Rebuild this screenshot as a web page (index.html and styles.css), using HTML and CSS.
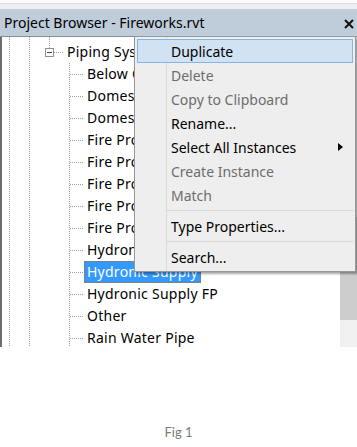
FILE: index.html
```html
<!DOCTYPE html>
<html lang="en">
<head>
    <meta charset="UTF-8">
    <meta name="viewport" content="width=device-width, initial-scale=1.0">
    <title>Project Browser - Fireworks.rvt</title>
    <link rel="stylesheet" href="styles.css">
</head>
<body>
    <div class="window">
        <div class="top-strip"></div>
        <div class="title-bar">
            <span class="title">Project Browser - Fireworks.rvt</span>
            <svg class="close" width="10" height="10" viewBox="0 0 10 10">
                <path d="M1 1L9 9M9 1L1 9" stroke="#111" stroke-width="2"/>
            </svg>
        </div>
        <div class="browser">
            <div class="tree">
                <div class="node sys">
                    <span class="toggle"></span>
                    <span class="branch"></span>
                    <span class="label">Piping Systems</span>
                </div>
                <div class="children">
                    <div class="node leaf"><span class="branch"></span><span class="label">Below Grade</span></div>
                    <div class="node leaf"><span class="branch"></span><span class="label">Domestic Cold Water</span></div>
                    <div class="node leaf"><span class="branch"></span><span class="label">Domestic Hot Water</span></div>
                    <div class="node leaf"><span class="branch"></span><span class="label">Fire Protection Dry</span></div>
                    <div class="node leaf"><span class="branch"></span><span class="label">Fire Protection Other</span></div>
                    <div class="node leaf"><span class="branch"></span><span class="label">Fire Protection Pre-Action</span></div>
                    <div class="node leaf"><span class="branch"></span><span class="label">Fire Protection Wet</span></div>
                    <div class="node leaf"><span class="branch"></span><span class="label">Fire Protection FP</span></div>
                    <div class="node leaf"><span class="branch"></span><span class="label">Hydronic Return</span></div>
                    <div class="node leaf"><span class="branch"></span><span class="label selected">Hydronic Supply</span></div>
                    <div class="node leaf"><span class="branch"></span><span class="label">Hydronic Supply FP</span></div>
                    <div class="node leaf"><span class="branch"></span><span class="label">Other</span></div>
                    <div class="node leaf"><span class="branch"></span><span class="label">Rain Water Pipe</span></div>
                    <div class="node leaf"><span class="branch"></span><span class="label">Sanitary</span></div>
                </div>
            </div>
            <div class="scrollbar"><div class="thumb"></div></div>
        </div>

        <ul class="menu">
            <li class="menu-item active">Duplicate</li>
            <li class="menu-item disabled">Delete</li>
            <li class="menu-item disabled">Copy to Clipboard</li>
            <li class="menu-item">Rename...</li>
            <li class="menu-item">Select All Instances<span class="arrow"></span></li>
            <li class="menu-item disabled">Create Instance</li>
            <li class="menu-item disabled">Match</li>
            <li class="separator"></li>
            <li class="menu-item">Type Properties...</li>
            <li class="separator"></li>
            <li class="menu-item">Search...</li>
        </ul>
    </div>
    <p class="caption">Fig 1</p>
</body>
</html>
```

FILE: styles.css
```css
body {
    margin: 0;
    background: #fff;
    font-family: "Noto Sans", "Open Sans", sans-serif;
    font-size: 14px;
    color: #000;
}
.window {
    position: relative;
    width: 357px;
}
.top-strip {
    height: 9px;
    background: linear-gradient(#fbfbfb 0 3px, #dadada 3px 4px, #efefef 4px);
}
.title-bar {
    height: 27px;
    background: #bfcddb;
    border-bottom: 1px solid #8e8e8e;
    display: flex;
    align-items: center;
    justify-content: space-between;
    padding: 0 3px 0 4px;
}
.title {
    white-space: nowrap;
}
.close {
    margin-top: 3px;
}
.browser {
    display: flex;
    height: 310px;
}
.tree {
    flex: 1;
    overflow: hidden;
    border-left: 2px solid #6d6d6d;
    background-image: repeating-linear-gradient(#a0a0a0 0 1px, transparent 1px 2px),
                      repeating-linear-gradient(#a0a0a0 0 1px, transparent 1px 2px);
    background-size: 1px 100%;
    background-position: 7px 0, 27px 0;
    background-repeat: no-repeat;
}
.node {
    display: flex;
    align-items: center;
    white-space: nowrap;
}
.sys {
    height: 26px;
    padding-top: 4px;
    box-sizing: border-box;
    background: repeating-linear-gradient(#a0a0a0 0 1px, transparent 1px 2px) 47px 0 / 1px 11px no-repeat;
}
.toggle {
    margin-left: 43px;
    width: 9px;
    height: 9px;
    box-sizing: border-box;
    border: 1px solid #919191;
    background: linear-gradient(#2b4a80, #2b4a80) center / 5px 1px no-repeat, #fcfcfc;
}
.branch {
    height: 1px;
    background: repeating-linear-gradient(to right, #a0a0a0 0 1px, transparent 1px 2px);
}
.sys .branch {
    width: 10px;
}
.label {
    padding: 0 3px;
    line-height: 22px;
    letter-spacing: 0.25px;
}
.children {
    margin-left: 67px;
    background: repeating-linear-gradient(#a0a0a0 0 1px, transparent 1px 2px) 0 0 / 1px 100% no-repeat;
}
.leaf {
    height: 22px;
}
.leaf .branch {
    margin-left: 1px;
    width: 14px;
}
.label.selected {
    margin-top: -1px;
    background: #3399ff;
    color: #fff;
    outline: 1px dotted #b86a1e;
    outline-offset: -1px;
}
.scrollbar {
    width: 17px;
    background: #f0f0f0;
}
.thumb {
    margin-top: 180px;
    height: 103px;
    background: #cdcdcd;
}
.menu {
    position: absolute;
    left: 134px;
    top: 36px;
    width: 222px;
    margin: 0;
    padding: 2px;
    box-sizing: border-box;
    list-style: none;
    border: 1px solid #979797;
    background: linear-gradient(#dadada, #dadada) 31px 0 / 1px 100% no-repeat, #eeeeee;
    box-shadow: 2px 2px 2px rgba(0, 0, 0, 0.35);
}
.menu-item {
    height: 24px;
    box-sizing: border-box;
    padding-left: 33px;
    border: 1px solid transparent;
    display: flex;
    align-items: center;
    white-space: nowrap;
}
.menu-item.active {
    background: #d1e2f2;
    border-color: #84b5e8;
}
.menu-item.disabled {
    color: #6d6d6d;
}
.arrow {
    margin-left: auto;
    margin-right: 9px;
    border-left: 5px solid #000;
    border-top: 4px solid transparent;
    border-bottom: 4px solid transparent;
}
.separator {
    height: 7px;
    margin-left: 29px;
    background: linear-gradient(#d7d7d7, #d7d7d7) 0 3px / 100% 1px no-repeat;
}
.caption {
    margin: 75px 0 0;
    text-align: center;
    font-family: Lato, sans-serif;
    font-size: 13px;
    line-height: 20px;
    color: #7a7a7a;
}
```
